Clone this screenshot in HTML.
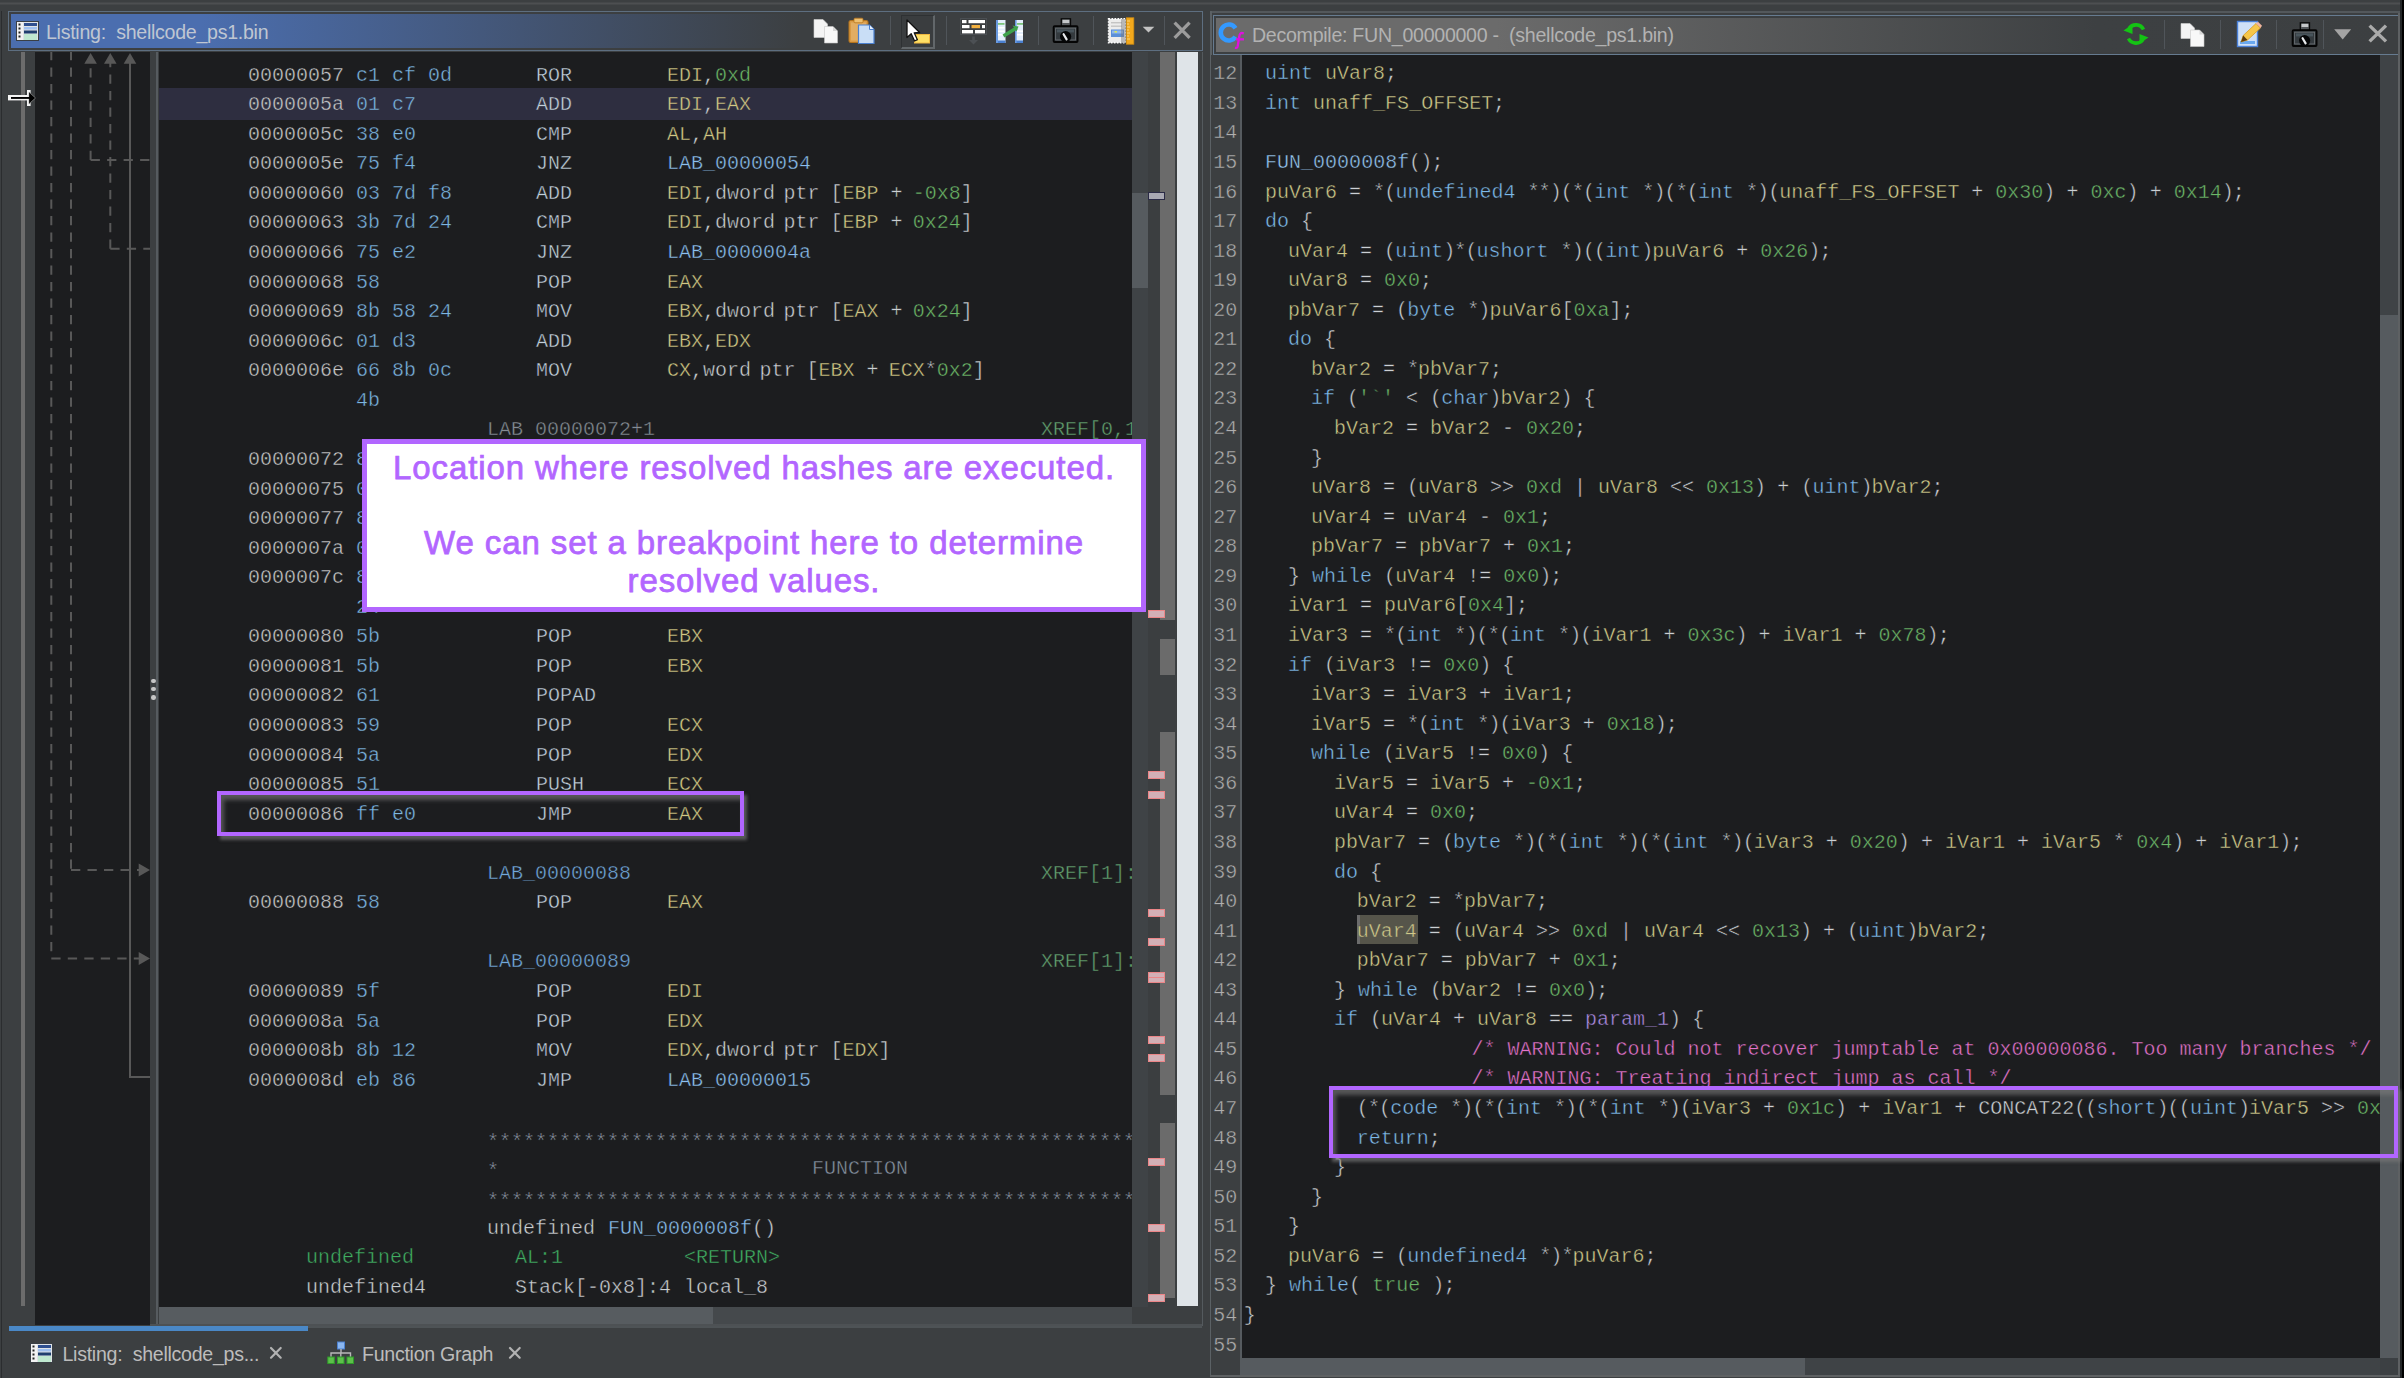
<!DOCTYPE html>
<html><head><meta charset="utf-8"><title>Ghidra</title>
<style>
*{box-sizing:border-box;margin:0;padding:0}
html,body{width:2404px;height:1378px;overflow:hidden;background:#3c3f41}
body{position:relative;font-family:"Liberation Sans",sans-serif}
.abs{position:absolute}
.t{-webkit-text-stroke:0.42px #1c1d1f;position:absolute;white-space:pre;font-family:"Liberation Mono",monospace;font-size:20px;line-height:30px;height:30px;color:#c3c7cb}
.ad{color:#cacaca}.by{color:#7cb6e2}.mn{color:#c2d0dc}.rg{color:#d2c884}.sc{color:#6cb868}.pn{color:#ccd0d4}
.lr{color:#8cc0f0}.lb{color:#6aa0e2}.ol{color:#848c94}.xr{color:#62a06e}.st{color:#848f9e}.gr{color:#40ae62}
.ty{color:#7ebaea}.va{color:#d0ca8a}.fn{color:#94c4f0}.pm{color:#ae8ce2}.cm{color:#e474cc}
.ln{color:#b0b0b0;-webkit-text-stroke:0.42px #3c3f41}
.hr{-webkit-text-stroke-color:#2e2e40}
.as{position:relative;top:3px;color:#98a3b2}
.lb{color:#72a8dc}
.hs{-webkit-text-stroke-color:#56554a}
.k{display:inline-block;white-space:pre}
/* panels */
#top1{left:0;top:2px;width:2404px;height:3px;background:linear-gradient(#404345,#4d4f51 50%,#404345)}
#top2{display:none}
#lhead{left:8px;top:11px;width:1195px;height:40px;border:1px solid #5d6e80}
#lheadfill{left:11px;top:14px;width:1189px;height:34px;background:linear-gradient(90deg,#4b6eaf 0px,#4b6eaf 190px,#3c3f41 790px)}
#lbody{left:159px;top:52px;width:973px;height:1255px;background:#1c1d1f;overflow:hidden}
#lmargin{left:35px;top:52px;width:115px;height:1273px;background:#1c1d1f}
#dbody{left:1242px;top:55px;width:1138px;height:1303px;background:#1c1d1f;overflow:hidden}
#dnum{left:1211px;top:55px;width:31px;height:1323px;background:#3c3f41;overflow:hidden}
.title{position:absolute;white-space:pre;color:#bfc6d2;font-size:19.6px;letter-spacing:-0.28px;line-height:24px}
</style></head>
<body>
<div id="top1" class="abs"></div><div id="top2" class="abs"></div>
<!-- LISTING HEADER -->
<div id="lhead" class="abs"></div><div id="lheadfill" class="abs"></div>
<div class="title" style="left:46px;top:20.3px">Listing:  shellcode_ps1.bin</div>
<!-- listing title icon -->
<svg class="abs" style="left:16px;top:21px" width="24" height="21" viewBox="0 0 24 21">
<rect x="0.5" y="0.5" width="22" height="19" fill="#dfe3e6" stroke="#3a3f45" stroke-width="1"/>
<rect x="1" y="1" width="6" height="18" fill="#f2f2f2"/>
<rect x="2.5" y="2.5" width="2" height="2" fill="#222"/><rect x="2.5" y="6.5" width="2" height="2" fill="#222"/><rect x="2.5" y="10.5" width="2" height="2" fill="#222"/><rect x="2.5" y="14.5" width="2" height="2" fill="#222"/>
<rect x="8" y="2" width="13" height="3" fill="#2f4f8f"/>
<rect x="8" y="6" width="13" height="2.5" fill="#9fc0f0"/>
<rect x="8" y="9.5" width="13" height="3" fill="#1f3f6f"/>
<rect x="8" y="13" width="13" height="6" fill="#bfe8d0"/>
</svg>
<!-- copy -->
<svg class="abs" style="left:812px;top:18px" width="28" height="27" viewBox="0 0 28 27">
<path d="M2 1.5H11L15.5 6V19.5H2Z" fill="#f4f4f4" stroke="#d0d0d0" stroke-width=".6"/>
<path d="M12.5 8.5H21L25.5 13V25H12.5Z" fill="#f8f8f8" stroke="#c8c8c8" stroke-width=".6"/>
<path d="M21 8.5V13H25.5Z" fill="#d8d8d8"/>
</svg>
<!-- paste -->
<svg class="abs" style="left:847px;top:17px" width="30" height="28" viewBox="0 0 30 28">
<rect x="2" y="3.5" width="19" height="22" rx="1.5" fill="#d99a45" stroke="#b5741c" stroke-width="1"/>
<rect x="4" y="5.5" width="15" height="18" fill="#e2ad62"/>
<rect x="7" y="1.2" width="9" height="4.6" rx="1" fill="#efc070" stroke="#b5741c" stroke-width=".8"/>
<path d="M11.5 8H22.5L27 12.5V26.5H11.5Z" fill="#c9def6" stroke="#4a80d0" stroke-width="1.2"/>
<path d="M22.5 8V12.5H27" fill="#eaf2fc" stroke="#4a80d0" stroke-width="1"/>
</svg>
<div class="abs" style="left:890px;top:16px;width:1px;height:29px;background:#50555a"></div>
<!-- selected toggle button -->
<div class="abs" style="left:901px;top:15px;width:34px;height:34px;background:#3a3d3f;border-top:1px solid #2e3133;border-left:1px solid #2e3133;border-right:2px solid #62676a;border-bottom:2px solid #62676a"></div>
<svg class="abs" style="left:903px;top:17px" width="30" height="30" viewBox="0 0 30 30">
<rect x="11.5" y="17.5" width="15" height="8.5" fill="#ffe066" stroke="#efb840" stroke-width="1"/>
<path d="M4 3L4 20.5L8.2 16.8L11.6 24L14.4 22.7L11.2 15.8L16.6 15.5Z" fill="#fff" stroke="#111" stroke-width="1.3" stroke-linejoin="round"/>
</svg>
<div class="abs" style="left:946px;top:16px;width:1px;height:29px;background:#50555a"></div>
<!-- bars icon -->
<svg class="abs" style="left:960px;top:18px" width="28" height="28" viewBox="0 0 28 28">
<rect x="0.5" y="0.5" width="26" height="16" fill="none" stroke="#4a4e52" stroke-width="1"/>
<rect x="2" y="2" width="4.5" height="3.2" fill="#fff"/><rect x="8.5" y="2" width="16.5" height="3.2" fill="#fff"/>
<rect x="2" y="7" width="7.5" height="3.2" fill="#fff"/><rect x="11.5" y="7" width="8.5" height="3.2" fill="#f2b040"/><rect x="22" y="7" width="3" height="3.2" fill="#fff"/>
<rect x="2" y="12" width="11" height="3.4" fill="#fff"/><rect x="15" y="12" width="10" height="3.4" fill="#fff"/>
<path d="M12.2 18.5H14.8V22H18L13.5 26.5L9 22H12.2Z" fill="#4c5054"/>
</svg>
<!-- diff icon -->
<svg class="abs" style="left:995px;top:19px" width="29" height="25" viewBox="0 0 29 25">
<rect x="1" y="1" width="9.5" height="23" fill="#e4eefb"/><rect x="1" y="21.5" width="9.5" height="2.5" fill="#4a80d0"/><rect x="1" y="1" width="2" height="23" fill="#6a9ae0"/>
<rect x="3" y="4" width="6.5" height="1.8" fill="#7cc47c"/><rect x="3" y="8" width="6.5" height="1.5" fill="#fff"/><rect x="3" y="11.5" width="6.5" height="1.5" fill="#fff"/><rect x="3" y="15" width="6.5" height="1.5" fill="#fff"/>
<rect x="20" y="1" width="8" height="23" fill="#e4eefb"/><rect x="20" y="21.5" width="8" height="2.5" fill="#4a80d0"/><rect x="20" y="1" width="1.6" height="23" fill="#6a9ae0"/>
<rect x="22" y="4" width="6" height="1.8" fill="#7cc47c"/><rect x="22" y="11.5" width="6" height="1.5" fill="#fff"/><rect x="22" y="15" width="6" height="1.5" fill="#fff"/>
<path d="M8.5 17L21.5 9" stroke="#3ea24c" stroke-width="3.6" fill="none"/>
<path d="M17.5 6.5L23.5 7.5L21.5 12.5Z" fill="#3ea24c"/>
</svg>
<div class="abs" style="left:1038px;top:16px;width:1px;height:29px;background:#50555a"></div>
<!-- camera -->
<svg class="abs" style="left:1052px;top:17px" width="27" height="27" viewBox="0 0 27 27"><use href="#cam"/></svg>
<div class="abs" style="left:1093px;top:16px;width:1px;height:29px;background:#50555a"></div>
<!-- page+ruler -->
<svg class="abs" style="left:1107px;top:17px" width="28" height="28" viewBox="0 0 28 28">
<rect x="1.5" y="1.8" width="17" height="24" fill="#ececec" stroke="#fff" stroke-width="1.4" stroke-dasharray="1.6 1.4"/>
<rect x="4" y="5" width="11" height="1.4" fill="#c4c4c4"/><rect x="4" y="8.5" width="11" height="1.4" fill="#c4c4c4"/>
<rect x="4" y="12.5" width="13" height="7.5" fill="#5a8fd8"/><rect x="5" y="13.5" width="11" height="3" fill="#8fb8ee"/><rect x="7.5" y="14" width="2.5" height="1.6" fill="#d8e860"/>
<rect x="14" y="2" width="5" height="24" fill="#777" opacity=".45"/>
<rect x="19.4" y="0.8" width="7.4" height="26.4" fill="#f2a81c" stroke="#d08c10" stroke-width=".8"/>
<path d="M20 4H23M20 7H22M20 10H23M20 13H22M20 16H23M20 19H22M20 22H23" stroke="#fbd57a" stroke-width="1"/>
</svg>
<svg class="abs" style="left:1142px;top:26px" width="13" height="8" viewBox="0 0 13 8"><path d="M0.7 0.7H12.3L6.5 6.5Z" fill="#c2c2c2"/></svg>
<div class="abs" style="left:1164px;top:16px;width:1px;height:29px;background:#50555a"></div>
<svg class="abs" style="left:1172px;top:20px" width="20" height="20" viewBox="0 0 20 20"><path d="M2.6 2.6L17.6 17.8M17.6 2.6L2.6 17.8" stroke="#9c9c9c" stroke-width="3.3" fill="none"/></svg>
<svg width="0" height="0" style="position:absolute"><defs>
<g id="cam">
<rect x="9.3" y="1.8" width="9.2" height="7.5" fill="#55595c" stroke="#0a0a0a" stroke-width="1.3"/>
<rect x="10.5" y="2.8" width="6.8" height="3.2" fill="#c4c7c9"/>
<rect x="1.6" y="9.2" width="24" height="15.8" rx="1" fill="#2b3033" stroke="#050505" stroke-width="1.8"/>
<rect x="3.6" y="11.2" width="20" height="11.8" fill="#343a3e" stroke="#6a6f73" stroke-width=".9"/>
<rect x="5" y="12.4" width="17" height="3" fill="#5a6a72" opacity=".55"/>
<circle cx="13.6" cy="19.6" r="5.6" fill="#050607"/>
<path d="M11.6 17.2L14.6 22.4" stroke="#e8eaec" stroke-width="2.2" stroke-linecap="round"/>
</g></g></defs></svg>

<!-- LEFT MARGIN -->
<div class="abs" style="left:1px;top:11px;width:1px;height:1367px;background:#2b2d2f"></div>
<div class="abs" style="left:20.5px;top:52px;width:4.5px;height:1254px;background:#6c6c6c"></div>
<div id="lmargin" class="abs"></div>
<div class="abs" style="left:156px;top:52px;width:2px;height:1273px;background:#565b5f"></div>
<svg class="abs" style="left:35px;top:52px" width="115" height="1273" viewBox="0 0 115 1273" fill="none" stroke="#585858" stroke-width="2">
<g stroke-dasharray="9.3 7.2">
<path d="M16.3 0V906.6" stroke-dashoffset="1"/>
<path d="M16.3 906.6H104"/>
<path d="M36 0V818" stroke-dashoffset="1"/>
<path d="M36 818H104"/>
<path d="M55.6 108V12"/>
<path d="M55.6 108H115"/>
<path d="M75.3 196.7V10"/>
<path d="M75.3 196.7H115"/>
</g>
<path d="M95 6V1025H115"/>
<g fill="#585858" stroke="none">
<path d="M49.3 11.8L55.6 1L61.9 11.8Z"/>
<path d="M69 11.8L75.3 1L81.6 11.8Z"/>
<path d="M88.7 11.8L95 1L101.3 11.8Z"/>
<path d="M103.7 811.5L115 818L103.7 824.5Z"/>
<path d="M103.7 900.1L115 906.6L103.7 913.1Z"/>
</g>
</svg>
<!-- splitter dots -->
<div class="abs" style="left:151.2px;top:678.5px;width:4.6px;height:4.6px;border-radius:50%;background:#c6c6c6"></div>
<div class="abs" style="left:151.2px;top:686.8px;width:4.6px;height:4.6px;border-radius:50%;background:#c6c6c6"></div>
<div class="abs" style="left:151.2px;top:695.0px;width:4.6px;height:4.6px;border-radius:50%;background:#c6c6c6"></div>
<!-- mouse cursor -->
<svg class="abs" style="left:6px;top:88px" width="32" height="20" viewBox="0 0 32 20">
<rect x="2" y="7" width="21" height="5.4" fill="#f4f4f4"/>
<rect x="21" y="2" width="3.6" height="16" fill="#f4f4f4"/>
<path d="M23.2 4.2L29.3 10L23.2 15.8Z" fill="#000" stroke="#9a9a9a" stroke-width="1"/>
<path d="M23.2 4.6L29 10L23.2 15.4Z" fill="#000"/>
<rect x="5" y="9" width="19" height="1.9" fill="#000"/>
</svg>

<!-- LISTING BODY -->
<div id="lbody" class="abs">
<div class="abs" style="left:0;top:36px;width:973px;height:32px;background:#2e2e40"></div>
<div class="t" style="left:89px;top:8.67px"><span class="ad">00000057</span></div>
<div class="t" style="left:197px;top:8.67px"><span class="by">c1 cf 0d</span></div>
<div class="t" style="left:377px;top:8.67px"><span class="mn">ROR</span></div>
<div class="t" style="left:508px;top:8.67px"><span class="k rg" style="width:36.00px">EDI</span><span class="k pn" style="width:12.00px">,</span><span class="k sc" style="width:36.00px">0xd</span></div>
<div class="t hr" style="left:89px;top:38.23px"><span class="ad">0000005a</span></div>
<div class="t hr" style="left:197px;top:38.23px"><span class="by">01 c7</span></div>
<div class="t hr" style="left:377px;top:38.23px"><span class="mn">ADD</span></div>
<div class="t hr" style="left:508px;top:38.23px"><span class="k rg" style="width:36.00px">EDI</span><span class="k pn" style="width:12.00px">,</span><span class="k rg" style="width:36.00px">EAX</span></div>
<div class="t" style="left:89px;top:67.79px"><span class="ad">0000005c</span></div>
<div class="t" style="left:197px;top:67.79px"><span class="by">38 e0</span></div>
<div class="t" style="left:377px;top:67.79px"><span class="mn">CMP</span></div>
<div class="t" style="left:508px;top:67.79px"><span class="k rg" style="width:24.00px">AL</span><span class="k pn" style="width:12.00px">,</span><span class="k rg" style="width:24.00px">AH</span></div>
<div class="t" style="left:89px;top:97.35px"><span class="ad">0000005e</span></div>
<div class="t" style="left:197px;top:97.35px"><span class="by">75 f4</span></div>
<div class="t" style="left:377px;top:97.35px"><span class="mn">JNZ</span></div>
<div class="t" style="left:508px;top:97.35px"><span class="k lr" style="width:144.00px">LAB_00000054</span></div>
<div class="t" style="left:89px;top:126.91px"><span class="ad">00000060</span></div>
<div class="t" style="left:197px;top:126.91px"><span class="by">03 7d f8</span></div>
<div class="t" style="left:377px;top:126.91px"><span class="mn">ADD</span></div>
<div class="t" style="left:508px;top:126.91px"><span class="k rg" style="width:36.00px">EDI</span><span class="k pn" style="width:72.00px">,dword</span><span class="k" style="width:8.6px"> </span><span class="k pn" style="width:36.00px">ptr</span><span class="k" style="width:10.9px"> </span><span class="k pn" style="width:12.00px">[</span><span class="k rg" style="width:36.00px">EBP</span><span class="k pn" style="width:34.20px"> + </span><span class="k sc" style="width:48.00px">-0x8</span><span class="k pn" style="width:12.00px">]</span></div>
<div class="t" style="left:89px;top:156.47px"><span class="ad">00000063</span></div>
<div class="t" style="left:197px;top:156.47px"><span class="by">3b 7d 24</span></div>
<div class="t" style="left:377px;top:156.47px"><span class="mn">CMP</span></div>
<div class="t" style="left:508px;top:156.47px"><span class="k rg" style="width:36.00px">EDI</span><span class="k pn" style="width:72.00px">,dword</span><span class="k" style="width:8.6px"> </span><span class="k pn" style="width:36.00px">ptr</span><span class="k" style="width:10.9px"> </span><span class="k pn" style="width:12.00px">[</span><span class="k rg" style="width:36.00px">EBP</span><span class="k pn" style="width:34.20px"> + </span><span class="k sc" style="width:48.00px">0x24</span><span class="k pn" style="width:12.00px">]</span></div>
<div class="t" style="left:89px;top:186.03px"><span class="ad">00000066</span></div>
<div class="t" style="left:197px;top:186.03px"><span class="by">75 e2</span></div>
<div class="t" style="left:377px;top:186.03px"><span class="mn">JNZ</span></div>
<div class="t" style="left:508px;top:186.03px"><span class="k lr" style="width:144.00px">LAB_0000004a</span></div>
<div class="t" style="left:89px;top:215.59px"><span class="ad">00000068</span></div>
<div class="t" style="left:197px;top:215.59px"><span class="by">58</span></div>
<div class="t" style="left:377px;top:215.59px"><span class="mn">POP</span></div>
<div class="t" style="left:508px;top:215.59px"><span class="k rg" style="width:36.00px">EAX</span></div>
<div class="t" style="left:89px;top:245.15px"><span class="ad">00000069</span></div>
<div class="t" style="left:197px;top:245.15px"><span class="by">8b 58 24</span></div>
<div class="t" style="left:377px;top:245.15px"><span class="mn">MOV</span></div>
<div class="t" style="left:508px;top:245.15px"><span class="k rg" style="width:36.00px">EBX</span><span class="k pn" style="width:72.00px">,dword</span><span class="k" style="width:8.6px"> </span><span class="k pn" style="width:36.00px">ptr</span><span class="k" style="width:10.9px"> </span><span class="k pn" style="width:12.00px">[</span><span class="k rg" style="width:36.00px">EAX</span><span class="k pn" style="width:34.20px"> + </span><span class="k sc" style="width:48.00px">0x24</span><span class="k pn" style="width:12.00px">]</span></div>
<div class="t" style="left:89px;top:274.71px"><span class="ad">0000006c</span></div>
<div class="t" style="left:197px;top:274.71px"><span class="by">01 d3</span></div>
<div class="t" style="left:377px;top:274.71px"><span class="mn">ADD</span></div>
<div class="t" style="left:508px;top:274.71px"><span class="k rg" style="width:36.00px">EBX</span><span class="k pn" style="width:12.00px">,</span><span class="k rg" style="width:36.00px">EDX</span></div>
<div class="t" style="left:89px;top:304.27px"><span class="ad">0000006e</span></div>
<div class="t" style="left:197px;top:304.27px"><span class="by">66 8b 0c</span></div>
<div class="t" style="left:377px;top:304.27px"><span class="mn">MOV</span></div>
<div class="t" style="left:508px;top:304.27px"><span class="k rg" style="width:24.00px">CX</span><span class="k pn" style="width:60.00px">,word</span><span class="k" style="width:8.6px"> </span><span class="k pn" style="width:36.00px">ptr</span><span class="k" style="width:10.9px"> </span><span class="k pn" style="width:12.00px">[</span><span class="k rg" style="width:36.00px">EBX</span><span class="k pn" style="width:34.20px"> + </span><span class="k rg" style="width:36.00px">ECX</span><span class="k pn" style="width:12.00px">*</span><span class="k sc" style="width:36.00px">0x2</span><span class="k pn" style="width:12.00px">]</span></div>
<div class="t" style="left:197px;top:333.83px"><span class="by">4b</span></div>
<div class="t" style="left:328px;top:363.39px"><span class="ol">LAB 00000072+1</span></div>
<div class="t" style="left:882px;top:363.39px"><span class="xr">XREF[0,1]:</span></div>
<div class="t" style="left:89px;top:392.95px"><span class="ad">00000072</span></div>
<div class="t" style="left:197px;top:392.95px"><span class="by">8b 58 1c</span></div>
<div class="t" style="left:377px;top:392.95px"><span class="mn">MOV</span></div>
<div class="t" style="left:508px;top:392.95px"><span class="k rg" style="width:36.00px">EBX</span><span class="k pn" style="width:72.00px">,dword</span><span class="k" style="width:8.6px"> </span><span class="k pn" style="width:36.00px">ptr</span><span class="k" style="width:10.9px"> </span><span class="k pn" style="width:12.00px">[</span><span class="k rg" style="width:36.00px">EAX</span><span class="k pn" style="width:34.20px"> + </span><span class="k sc" style="width:48.00px">0x1c</span><span class="k pn" style="width:12.00px">]</span></div>
<div class="t" style="left:89px;top:422.51px"><span class="ad">00000075</span></div>
<div class="t" style="left:197px;top:422.51px"><span class="by">01 d3</span></div>
<div class="t" style="left:377px;top:422.51px"><span class="mn">ADD</span></div>
<div class="t" style="left:508px;top:422.51px"><span class="k rg" style="width:36.00px">EBX</span><span class="k pn" style="width:12.00px">,</span><span class="k rg" style="width:36.00px">EDX</span></div>
<div class="t" style="left:89px;top:452.07px"><span class="ad">00000077</span></div>
<div class="t" style="left:197px;top:452.07px"><span class="by">8b 04 8b</span></div>
<div class="t" style="left:377px;top:452.07px"><span class="mn">MOV</span></div>
<div class="t" style="left:508px;top:452.07px"><span class="k rg" style="width:36.00px">EAX</span><span class="k pn" style="width:72.00px">,dword</span><span class="k" style="width:8.6px"> </span><span class="k pn" style="width:36.00px">ptr</span><span class="k" style="width:10.9px"> </span><span class="k pn" style="width:12.00px">[</span><span class="k rg" style="width:36.00px">EBX</span><span class="k pn" style="width:34.20px"> + </span><span class="k rg" style="width:36.00px">ECX</span><span class="k pn" style="width:12.00px">*</span><span class="k sc" style="width:36.00px">0x4</span><span class="k pn" style="width:12.00px">]</span></div>
<div class="t" style="left:89px;top:481.63px"><span class="ad">0000007a</span></div>
<div class="t" style="left:197px;top:481.63px"><span class="by">01 d0</span></div>
<div class="t" style="left:377px;top:481.63px"><span class="mn">ADD</span></div>
<div class="t" style="left:508px;top:481.63px"><span class="k rg" style="width:36.00px">EAX</span><span class="k pn" style="width:12.00px">,</span><span class="k rg" style="width:36.00px">EDX</span></div>
<div class="t" style="left:89px;top:511.19px"><span class="ad">0000007c</span></div>
<div class="t" style="left:197px;top:511.19px"><span class="by">89 44 24</span></div>
<div class="t" style="left:377px;top:511.19px"><span class="mn">MOV</span></div>
<div class="t" style="left:508px;top:511.19px"><span class="k pn" style="width:60.00px">dword</span><span class="k" style="width:8.6px"> </span><span class="k pn" style="width:36.00px">ptr</span><span class="k" style="width:10.9px"> </span><span class="k pn" style="width:12.00px">[</span><span class="k rg" style="width:36.00px">ESP</span><span class="k pn" style="width:34.20px"> + </span><span class="k sc" style="width:48.00px">0x24</span><span class="k pn" style="width:24.00px">],</span><span class="k rg" style="width:36.00px">EAX</span></div>
<div class="t" style="left:197px;top:540.75px"><span class="by">24</span></div>
<div class="t" style="left:89px;top:570.31px"><span class="ad">00000080</span></div>
<div class="t" style="left:197px;top:570.31px"><span class="by">5b</span></div>
<div class="t" style="left:377px;top:570.31px"><span class="mn">POP</span></div>
<div class="t" style="left:508px;top:570.31px"><span class="k rg" style="width:36.00px">EBX</span></div>
<div class="t" style="left:89px;top:599.87px"><span class="ad">00000081</span></div>
<div class="t" style="left:197px;top:599.87px"><span class="by">5b</span></div>
<div class="t" style="left:377px;top:599.87px"><span class="mn">POP</span></div>
<div class="t" style="left:508px;top:599.87px"><span class="k rg" style="width:36.00px">EBX</span></div>
<div class="t" style="left:89px;top:629.43px"><span class="ad">00000082</span></div>
<div class="t" style="left:197px;top:629.43px"><span class="by">61</span></div>
<div class="t" style="left:377px;top:629.43px"><span class="mn">POPAD</span></div>
<div class="t" style="left:89px;top:658.99px"><span class="ad">00000083</span></div>
<div class="t" style="left:197px;top:658.99px"><span class="by">59</span></div>
<div class="t" style="left:377px;top:658.99px"><span class="mn">POP</span></div>
<div class="t" style="left:508px;top:658.99px"><span class="k rg" style="width:36.00px">ECX</span></div>
<div class="t" style="left:89px;top:688.55px"><span class="ad">00000084</span></div>
<div class="t" style="left:197px;top:688.55px"><span class="by">5a</span></div>
<div class="t" style="left:377px;top:688.55px"><span class="mn">POP</span></div>
<div class="t" style="left:508px;top:688.55px"><span class="k rg" style="width:36.00px">EDX</span></div>
<div class="t" style="left:89px;top:718.11px"><span class="ad">00000085</span></div>
<div class="t" style="left:197px;top:718.11px"><span class="by">51</span></div>
<div class="t" style="left:377px;top:718.11px"><span class="mn">PUSH</span></div>
<div class="t" style="left:508px;top:718.11px"><span class="k rg" style="width:36.00px">ECX</span></div>
<div class="t" style="left:89px;top:747.67px"><span class="ad">00000086</span></div>
<div class="t" style="left:197px;top:747.67px"><span class="by">ff e0</span></div>
<div class="t" style="left:377px;top:747.67px"><span class="mn">JMP</span></div>
<div class="t" style="left:508px;top:747.67px"><span class="k rg" style="width:36.00px">EAX</span></div>
<div class="t" style="left:328px;top:806.79px"><span class="lb">LAB_00000088</span></div>
<div class="t" style="left:882px;top:806.79px"><span class="xr">XREF[1]:</span></div>
<div class="t" style="left:89px;top:836.35px"><span class="ad">00000088</span></div>
<div class="t" style="left:197px;top:836.35px"><span class="by">58</span></div>
<div class="t" style="left:377px;top:836.35px"><span class="mn">POP</span></div>
<div class="t" style="left:508px;top:836.35px"><span class="k rg" style="width:36.00px">EAX</span></div>
<div class="t" style="left:328px;top:895.47px"><span class="lb">LAB_00000089</span></div>
<div class="t" style="left:882px;top:895.47px"><span class="xr">XREF[1]:</span></div>
<div class="t" style="left:89px;top:925.03px"><span class="ad">00000089</span></div>
<div class="t" style="left:197px;top:925.03px"><span class="by">5f</span></div>
<div class="t" style="left:377px;top:925.03px"><span class="mn">POP</span></div>
<div class="t" style="left:508px;top:925.03px"><span class="k rg" style="width:36.00px">EDI</span></div>
<div class="t" style="left:89px;top:954.59px"><span class="ad">0000008a</span></div>
<div class="t" style="left:197px;top:954.59px"><span class="by">5a</span></div>
<div class="t" style="left:377px;top:954.59px"><span class="mn">POP</span></div>
<div class="t" style="left:508px;top:954.59px"><span class="k rg" style="width:36.00px">EDX</span></div>
<div class="t" style="left:89px;top:984.15px"><span class="ad">0000008b</span></div>
<div class="t" style="left:197px;top:984.15px"><span class="by">8b 12</span></div>
<div class="t" style="left:377px;top:984.15px"><span class="mn">MOV</span></div>
<div class="t" style="left:508px;top:984.15px"><span class="k rg" style="width:36.00px">EDX</span><span class="k pn" style="width:72.00px">,dword</span><span class="k" style="width:8.6px"> </span><span class="k pn" style="width:36.00px">ptr</span><span class="k" style="width:10.9px"> </span><span class="k pn" style="width:12.00px">[</span><span class="k rg" style="width:36.00px">EDX</span><span class="k pn" style="width:12.00px">]</span></div>
<div class="t" style="left:89px;top:1013.71px"><span class="ad">0000008d</span></div>
<div class="t" style="left:197px;top:1013.71px"><span class="by">eb 86</span></div>
<div class="t" style="left:377px;top:1013.71px"><span class="mn">JMP</span></div>
<div class="t" style="left:508px;top:1013.71px"><span class="k lr" style="width:144.00px">LAB_00000015</span></div>
<div class="t" style="left:328px;top:1072.83px"><span class="st as">************************************************************</span></div>
<div class="t" style="left:328px;top:1102.39px"><span class="st as">*</span></div>
<div class="t" style="left:653px;top:1102.39px"><span class="st">FUNCTION</span></div>
<div class="t" style="left:328px;top:1131.95px"><span class="st as">************************************************************</span></div>
<div class="t" style="left:328px;top:1161.51px"><span class="pn">undefined</span></div>
<div class="t" style="left:449px;top:1161.51px"><span class="k lr" style="width:144.00px">FUN_0000008f</span><span class="k pn" style="width:24.00px">()</span></div>
<div class="t" style="left:147px;top:1191.07px"><span class="gr">undefined</span></div>
<div class="t" style="left:356px;top:1191.07px"><span class="gr">AL:1</span></div>
<div class="t" style="left:525px;top:1191.07px"><span class="gr">&lt;RETURN&gt;</span></div>
<div class="t" style="left:147px;top:1220.63px"><span class="pn">undefined4</span></div>
<div class="t" style="left:356px;top:1220.63px"><span class="pn">Stack[-0x8]:4</span></div>
<div class="t" style="left:525px;top:1220.63px"><span class="pn">local_8</span></div>
</div>
<div class="abs" style="left:1132px;top:52px;width:16px;height:1255px;background:#3f4346"></div>
<div class="abs" style="left:1132px;top:193px;width:16px;height:95px;background:#565b5f"></div>
<div class="abs" style="left:1148px;top:52px;width:12px;height:1255px;background:#3b3e40"></div>
<div class="abs" style="left:1160px;top:52px;width:15px;height:568px;background:#6b6b6b"></div>
<div class="abs" style="left:1160px;top:639px;width:15px;height:36px;background:#6b6b6b"></div>
<div class="abs" style="left:1160px;top:732px;width:15px;height:363px;background:#6b6b6b"></div>
<div class="abs" style="left:1160px;top:1123px;width:15px;height:175px;background:#6b6b6b"></div>
<div class="abs" style="left:1177px;top:52px;width:21px;height:1254px;background:#dfe4e8"></div>
<div class="abs" style="left:1202px;top:52px;width:1px;height:1274px;background:#545a5e"></div>
<div class="abs" style="left:1148px;top:192px;width:17px;height:8px;background:#a8a8b2;border:1px solid #2a2a45"></div>
<div class="abs" style="left:1148px;top:610px;width:17px;height:8px;background:#d3b0b6;border:1px solid #ec8688"></div>
<div class="abs" style="left:1148px;top:771px;width:17px;height:8px;background:#d3b0b6;border:1px solid #ec8688"></div>
<div class="abs" style="left:1148px;top:790.5px;width:17px;height:8px;background:#d3b0b6;border:1px solid #ec8688"></div>
<div class="abs" style="left:1148px;top:908.5px;width:17px;height:8px;background:#d3b0b6;border:1px solid #ec8688"></div>
<div class="abs" style="left:1148px;top:937.5px;width:17px;height:8px;background:#d3b0b6;border:1px solid #ec8688"></div>
<div class="abs" style="left:1148px;top:1036px;width:17px;height:8px;background:#d3b0b6;border:1px solid #ec8688"></div>
<div class="abs" style="left:1148px;top:1053.5px;width:17px;height:8px;background:#d3b0b6;border:1px solid #ec8688"></div>
<div class="abs" style="left:1148px;top:1157.5px;width:17px;height:8px;background:#d3b0b6;border:1px solid #ec8688"></div>
<div class="abs" style="left:1148px;top:1223.5px;width:17px;height:8px;background:#d3b0b6;border:1px solid #ec8688"></div>
<div class="abs" style="left:1148px;top:1293.5px;width:17px;height:8px;background:#d3b0b6;border:1px solid #ec8688"></div>
<div class="abs" style="left:1148px;top:972px;width:17px;height:11px;background:#d3b0b6;border:1px solid #ec8688"></div>
<div class="abs" style="left:1149px;top:977px;width:15px;height:1px;background:#ec8688"></div>
<div class="abs" style="left:159px;top:1307px;width:1042px;height:17px;background:#45494c"></div>
<div class="abs" style="left:159px;top:1307px;width:554px;height:17px;background:#575c60"></div>
<div class="abs" style="left:1132px;top:1307px;width:69px;height:17px;background:#3c3f41"></div>
<div class="abs" style="left:150px;top:1324px;width:1052px;height:1.5px;background:#4d5154"></div>
<div class="abs" style="left:308px;top:1326px;width:894px;height:2px;background:#4e5356"></div>
<div class="abs" style="left:9px;top:1326px;width:299px;height:4.5px;background:#4a88c7"></div>
<svg class="abs" style="left:30px;top:1343px" width="24" height="21" viewBox="0 0 24 21">
<rect x="0.5" y="0.5" width="22" height="19" fill="#dfe3e6" stroke="#3a3f45" stroke-width="1"/>
<rect x="1" y="1" width="6" height="18" fill="#f2f2f2"/>
<rect x="2.5" y="2.5" width="2" height="2" fill="#222"/><rect x="2.5" y="6.5" width="2" height="2" fill="#222"/><rect x="2.5" y="10.5" width="2" height="2" fill="#222"/><rect x="2.5" y="14.5" width="2" height="2" fill="#222"/>
<rect x="8" y="2" width="13" height="3" fill="#2f4f8f"/>
<rect x="8" y="6" width="13" height="2.5" fill="#9fc0f0"/>
<rect x="8" y="9.5" width="13" height="3" fill="#1f3f6f"/>
<rect x="8" y="13" width="13" height="6" fill="#bfe8d0"/>
</svg>
<div class="title" id="tab1" style="left:62.5px;top:1342px;color:#bcbcbc">Listing:  shellcode_ps...</div>
<svg class="abs" style="left:269px;top:1345.6px" width="14" height="14" viewBox="0 0 14 14"><path d="M2 2L11.7 11.7M11.7 2L2 11.7" stroke="#b2b2b2" stroke-width="2.2" stroke-linecap="round" fill="none"/></svg>
<svg class="abs" style="left:327px;top:1341px" width="27" height="24" viewBox="0 0 27 24">
<rect x="10.5" y="1" width="7" height="7" fill="#8ab6f0" stroke="#4a80d0" stroke-width="1"/>
<path d="M14 8V12M4 16V12H23.5V16M13.8 12V16" stroke="#b8b8b8" stroke-width="1.4" fill="none"/>
<rect x="0.8" y="16" width="6.5" height="6.5" fill="#5cc04a" stroke="#2f9a2a" stroke-width="1"/>
<rect x="10.5" y="16" width="6.5" height="6.5" fill="#5cc04a" stroke="#2f9a2a" stroke-width="1"/>
<rect x="20" y="16" width="6.5" height="6.5" fill="#5cc04a" stroke="#2f9a2a" stroke-width="1"/>
</svg>
<div class="title" id="tab2" style="left:362px;top:1342px;color:#bcbcbc">Function Graph</div>
<svg class="abs" style="left:507.6px;top:1345.8px" width="14" height="14" viewBox="0 0 14 14"><path d="M2 2L11.7 11.7M11.7 2L2 11.7" stroke="#b2b2b2" stroke-width="2.2" stroke-linecap="round" fill="none"/></svg>

<!-- DECOMPILE -->
<!-- decompile panel frame -->
<div class="abs" style="left:1210px;top:11px;width:1194px;height:2px;background:#53585c"></div>
<div class="abs" style="left:1210px;top:11px;width:1.5px;height:1367px;background:#5b6165"></div>
<div class="abs" style="left:1240.3px;top:55px;width:1.7px;height:1320px;background:#565b5f;z-index:3"></div>
<div class="abs" style="left:1213px;top:15px;width:1187px;height:40px;border:1px solid #667b90"></div>
<div class="abs" style="left:1216px;top:18px;width:1181px;height:34px;background:linear-gradient(90deg,#6b6b6b 0px,#6b6b6b 280px,#3d4042 880px,#3c3f41 100%)"></div>
<svg class="abs" style="left:1218px;top:22px" width="30" height="28" viewBox="0 0 30 28">
<path d="M17.5 6.2A8 8 0 1 0 17.5 14.8" fill="none" stroke="#3399ff" stroke-width="4.6"/>
<path d="M25.8 11.5C22.5 10 21.5 12 21.2 15L19.6 24.5C19.3 26 18.2 26 17 25.6" fill="none" stroke="#e010e0" stroke-width="2.3"/>
<path d="M18 17.3H26" stroke="#e010e0" stroke-width="2.3"/>
</svg>
<div class="title" style="left:1252px;top:22.5px;color:#b2b2b2" id="dtitle">Decompile: FUN_00000000 -  (shellcode_ps1.bin)</div>
<!-- refresh -->
<svg class="abs" style="left:2122px;top:20px" width="28" height="28" viewBox="0 0 28 28">
<path d="M21.5 9.5A8.5 8.5 0 0 0 7 8.5" fill="none" stroke="#14c414" stroke-width="3.6"/>
<path d="M1.5 10.5L10.5 4.5L10.5 14Z" fill="#14c414"/>
<path d="M6.5 18.5A8.5 8.5 0 0 0 21 19.5" fill="none" stroke="#14c414" stroke-width="3.6"/>
<path d="M26.5 17.5L17.5 23.5L17.5 14Z" fill="#14c414"/>
</svg>
<div class="abs" style="left:2164px;top:20px;width:1px;height:29px;background:#50555a"></div>
<svg class="abs" style="left:2179px;top:22px" width="28" height="27" viewBox="0 0 28 27">
<path d="M2 1.5H11L15.5 6V16.5H2Z" fill="#f4f4f4" stroke="#d0d0d0" stroke-width=".6"/>
<path d="M11.5 8H20.5L25 12.5V24.5H11.5Z" fill="#f8f8f8" stroke="#c8c8c8" stroke-width=".6"/>
<path d="M20.5 8V12.5H25Z" fill="#d8d8d8"/>
</svg>
<div class="abs" style="left:2220px;top:20px;width:1px;height:29px;background:#50555a"></div>
<!-- edit -->
<svg class="abs" style="left:2236px;top:20px" width="27" height="28" viewBox="0 0 27 28">
<rect x="1.5" y="1.5" width="20" height="25" fill="#cfe0f7" stroke="#4a80d8" stroke-width="1.4"/>
<rect x="4" y="21" width="15" height="3" fill="#6aa8ee"/>
<path d="M5 22L7.2 15.5L20 3.5L24.5 8L11.5 20Z" fill="#f6c64a" stroke="#d89a20" stroke-width=".8"/>
<path d="M20 3.5L22 1.8L26 5.8L24.5 8Z" fill="#f2b6a0"/>
<path d="M5 22L7.2 15.5L11.5 20Z" fill="#5a3a10"/>
</svg>
<div class="abs" style="left:2276px;top:20px;width:1px;height:29px;background:#50555a"></div>
<svg class="abs" style="left:2291px;top:21px" width="27" height="27" viewBox="0 0 27 27"><use href="#cam"/></svg>
<div class="abs" style="left:2323px;top:20px;width:1px;height:29px;background:#50555a"></div>
<svg class="abs" style="left:2333px;top:28px" width="20" height="13" viewBox="0 0 20 13"><path d="M1.2 1.2H18.2L9.7 11.5Z" fill="#a4a4a4"/></svg>
<svg class="abs" style="left:2367px;top:23px" width="22" height="21" viewBox="0 0 22 21"><path d="M2.6 2.6L19 18.4M19 2.6L2.6 18.4" stroke="#aaaaaa" stroke-width="3.4" fill="none"/></svg>

<div id="dnum" class="abs">
<div class="t ln" style="left:2.2px;top:4.27px">12</div>
<div class="t ln" style="left:2.2px;top:33.83px">13</div>
<div class="t ln" style="left:2.2px;top:63.40px">14</div>
<div class="t ln" style="left:2.2px;top:92.97px">15</div>
<div class="t ln" style="left:2.2px;top:122.53px">16</div>
<div class="t ln" style="left:2.2px;top:152.10px">17</div>
<div class="t ln" style="left:2.2px;top:181.66px">18</div>
<div class="t ln" style="left:2.2px;top:211.23px">19</div>
<div class="t ln" style="left:2.2px;top:240.79px">20</div>
<div class="t ln" style="left:2.2px;top:270.36px">21</div>
<div class="t ln" style="left:2.2px;top:299.92px">22</div>
<div class="t ln" style="left:2.2px;top:329.49px">23</div>
<div class="t ln" style="left:2.2px;top:359.05px">24</div>
<div class="t ln" style="left:2.2px;top:388.62px">25</div>
<div class="t ln" style="left:2.2px;top:418.18px">26</div>
<div class="t ln" style="left:2.2px;top:447.75px">27</div>
<div class="t ln" style="left:2.2px;top:477.31px">28</div>
<div class="t ln" style="left:2.2px;top:506.88px">29</div>
<div class="t ln" style="left:2.2px;top:536.44px">30</div>
<div class="t ln" style="left:2.2px;top:566.00px">31</div>
<div class="t ln" style="left:2.2px;top:595.57px">32</div>
<div class="t ln" style="left:2.2px;top:625.13px">33</div>
<div class="t ln" style="left:2.2px;top:654.70px">34</div>
<div class="t ln" style="left:2.2px;top:684.26px">35</div>
<div class="t ln" style="left:2.2px;top:713.83px">36</div>
<div class="t ln" style="left:2.2px;top:743.39px">37</div>
<div class="t ln" style="left:2.2px;top:772.96px">38</div>
<div class="t ln" style="left:2.2px;top:802.52px">39</div>
<div class="t ln" style="left:2.2px;top:832.09px">40</div>
<div class="t ln" style="left:2.2px;top:861.65px">41</div>
<div class="t ln" style="left:2.2px;top:891.22px">42</div>
<div class="t ln" style="left:2.2px;top:920.78px">43</div>
<div class="t ln" style="left:2.2px;top:950.35px">44</div>
<div class="t ln" style="left:2.2px;top:979.92px">45</div>
<div class="t ln" style="left:2.2px;top:1009.48px">46</div>
<div class="t ln" style="left:2.2px;top:1039.05px">47</div>
<div class="t ln" style="left:2.2px;top:1068.61px">48</div>
<div class="t ln" style="left:2.2px;top:1098.17px">49</div>
<div class="t ln" style="left:2.2px;top:1127.74px">50</div>
<div class="t ln" style="left:2.2px;top:1157.31px">51</div>
<div class="t ln" style="left:2.2px;top:1186.87px">52</div>
<div class="t ln" style="left:2.2px;top:1216.43px">53</div>
<div class="t ln" style="left:2.2px;top:1246.00px">54</div>
<div class="t ln" style="left:2.2px;top:1275.57px">55</div>
</div>
<div id="dbody" class="abs">
<div class="t" style="left:23.12000000000012px;top:4.27px"><span class="k ty" style="width:48.00px">uint</span><span class="k pn" style="width:12.00px"> </span><span class="k va" style="width:60.00px">uVar8</span><span class="k pn" style="width:12.00px">;</span></div>
<div class="t" style="left:23.12000000000012px;top:33.83px"><span class="k ty" style="width:36.00px">int</span><span class="k pn" style="width:12.00px"> </span><span class="k va" style="width:180.00px">unaff_FS_OFFSET</span><span class="k pn" style="width:12.00px">;</span></div>
<div class="t" style="left:23.12000000000012px;top:92.97px"><span class="k fn" style="width:144.00px">FUN_0000008f</span><span class="k pn" style="width:11.15px">(</span><span class="k pn" style="width:11.15px">)</span><span class="k pn" style="width:12.00px">;</span></div>
<div class="t" style="left:23.12000000000012px;top:122.53px"><span class="k va" style="width:72.00px">puVar6</span><span class="k pn" style="width:12.00px"> </span><span class="k pn" style="width:12.00px">=</span><span class="k pn" style="width:12.00px"> </span><span class="k pn" style="width:11.15px">*</span><span class="k pn" style="width:11.15px">(</span><span class="k ty" style="width:120.00px">undefined4</span><span class="k pn" style="width:12.00px"> </span><span class="k pn" style="width:11.15px">*</span><span class="k pn" style="width:11.15px">*</span><span class="k pn" style="width:11.15px">)</span><span class="k pn" style="width:11.15px">(</span><span class="k pn" style="width:11.15px">*</span><span class="k pn" style="width:11.15px">(</span><span class="k ty" style="width:36.00px">int</span><span class="k pn" style="width:12.00px"> </span><span class="k pn" style="width:11.15px">*</span><span class="k pn" style="width:11.15px">)</span><span class="k pn" style="width:11.15px">(</span><span class="k pn" style="width:11.15px">*</span><span class="k pn" style="width:11.15px">(</span><span class="k ty" style="width:36.00px">int</span><span class="k pn" style="width:12.00px"> </span><span class="k pn" style="width:11.15px">*</span><span class="k pn" style="width:11.15px">)</span><span class="k pn" style="width:11.15px">(</span><span class="k va" style="width:180.00px">unaff_FS_OFFSET</span><span class="k pn" style="width:12.00px"> </span><span class="k pn" style="width:12.00px">+</span><span class="k pn" style="width:12.00px"> </span><span class="k sc" style="width:48.00px">0x30</span><span class="k pn" style="width:11.15px">)</span><span class="k pn" style="width:12.00px"> </span><span class="k pn" style="width:12.00px">+</span><span class="k pn" style="width:12.00px"> </span><span class="k sc" style="width:36.00px">0xc</span><span class="k pn" style="width:11.15px">)</span><span class="k pn" style="width:12.00px"> </span><span class="k pn" style="width:12.00px">+</span><span class="k pn" style="width:12.00px"> </span><span class="k sc" style="width:48.00px">0x14</span><span class="k pn" style="width:11.15px">)</span><span class="k pn" style="width:12.00px">;</span></div>
<div class="t" style="left:23.12000000000012px;top:152.10px"><span class="k ty" style="width:24.00px">do</span><span class="k pn" style="width:12.00px"> </span><span class="k pn" style="width:12.00px">{</span></div>
<div class="t" style="left:46.039999999999964px;top:181.66px"><span class="k va" style="width:60.00px">uVar4</span><span class="k pn" style="width:12.00px"> </span><span class="k pn" style="width:12.00px">=</span><span class="k pn" style="width:12.00px"> </span><span class="k pn" style="width:11.15px">(</span><span class="k ty" style="width:48.00px">uint</span><span class="k pn" style="width:11.15px">)</span><span class="k pn" style="width:11.15px">*</span><span class="k pn" style="width:11.15px">(</span><span class="k ty" style="width:72.00px">ushort</span><span class="k pn" style="width:12.00px"> </span><span class="k pn" style="width:11.15px">*</span><span class="k pn" style="width:11.15px">)</span><span class="k pn" style="width:11.15px">(</span><span class="k pn" style="width:11.15px">(</span><span class="k ty" style="width:36.00px">int</span><span class="k pn" style="width:11.15px">)</span><span class="k va" style="width:72.00px">puVar6</span><span class="k pn" style="width:12.00px"> </span><span class="k pn" style="width:12.00px">+</span><span class="k pn" style="width:12.00px"> </span><span class="k sc" style="width:48.00px">0x26</span><span class="k pn" style="width:11.15px">)</span><span class="k pn" style="width:12.00px">;</span></div>
<div class="t" style="left:46.039999999999964px;top:211.23px"><span class="k va" style="width:60.00px">uVar8</span><span class="k pn" style="width:12.00px"> </span><span class="k pn" style="width:12.00px">=</span><span class="k pn" style="width:12.00px"> </span><span class="k sc" style="width:36.00px">0x0</span><span class="k pn" style="width:12.00px">;</span></div>
<div class="t" style="left:46.039999999999964px;top:240.79px"><span class="k va" style="width:72.00px">pbVar7</span><span class="k pn" style="width:12.00px"> </span><span class="k pn" style="width:12.00px">=</span><span class="k pn" style="width:12.00px"> </span><span class="k pn" style="width:11.15px">(</span><span class="k ty" style="width:48.00px">byte</span><span class="k pn" style="width:12.00px"> </span><span class="k pn" style="width:11.15px">*</span><span class="k pn" style="width:11.15px">)</span><span class="k va" style="width:72.00px">puVar6</span><span class="k pn" style="width:12.00px">[</span><span class="k sc" style="width:36.00px">0xa</span><span class="k pn" style="width:12.00px">]</span><span class="k pn" style="width:12.00px">;</span></div>
<div class="t" style="left:46.039999999999964px;top:270.36px"><span class="k ty" style="width:24.00px">do</span><span class="k pn" style="width:12.00px"> </span><span class="k pn" style="width:12.00px">{</span></div>
<div class="t" style="left:68.96000000000004px;top:299.92px"><span class="k va" style="width:60.00px">bVar2</span><span class="k pn" style="width:12.00px"> </span><span class="k pn" style="width:12.00px">=</span><span class="k pn" style="width:12.00px"> </span><span class="k pn" style="width:11.15px">*</span><span class="k va" style="width:72.00px">pbVar7</span><span class="k pn" style="width:12.00px">;</span></div>
<div class="t" style="left:68.96000000000004px;top:329.49px"><span class="k ty" style="width:24.00px">if</span><span class="k pn" style="width:12.00px"> </span><span class="k pn" style="width:11.15px">(</span><span class="k sc" style="width:36.00px">'`'</span><span class="k pn" style="width:12.00px"> </span><span class="k pn" style="width:12.00px">&lt;</span><span class="k pn" style="width:12.00px"> </span><span class="k pn" style="width:11.15px">(</span><span class="k ty" style="width:48.00px">char</span><span class="k pn" style="width:11.15px">)</span><span class="k va" style="width:60.00px">bVar2</span><span class="k pn" style="width:11.15px">)</span><span class="k pn" style="width:12.00px"> </span><span class="k pn" style="width:12.00px">{</span></div>
<div class="t" style="left:91.88000000000011px;top:359.05px"><span class="k va" style="width:60.00px">bVar2</span><span class="k pn" style="width:12.00px"> </span><span class="k pn" style="width:12.00px">=</span><span class="k pn" style="width:12.00px"> </span><span class="k va" style="width:60.00px">bVar2</span><span class="k pn" style="width:12.00px"> </span><span class="k pn" style="width:12.00px">-</span><span class="k pn" style="width:12.00px"> </span><span class="k sc" style="width:48.00px">0x20</span><span class="k pn" style="width:12.00px">;</span></div>
<div class="t" style="left:68.96000000000004px;top:388.62px"><span class="k pn" style="width:12.00px">}</span></div>
<div class="t" style="left:68.96000000000004px;top:418.18px"><span class="k va" style="width:60.00px">uVar8</span><span class="k pn" style="width:12.00px"> </span><span class="k pn" style="width:12.00px">=</span><span class="k pn" style="width:12.00px"> </span><span class="k pn" style="width:11.15px">(</span><span class="k va" style="width:60.00px">uVar8</span><span class="k pn" style="width:12.00px"> </span><span class="k pn" style="width:12.00px">&gt;</span><span class="k pn" style="width:12.00px">&gt;</span><span class="k pn" style="width:12.00px"> </span><span class="k sc" style="width:36.00px">0xd</span><span class="k pn" style="width:12.00px"> </span><span class="k pn" style="width:12.00px">|</span><span class="k pn" style="width:12.00px"> </span><span class="k va" style="width:60.00px">uVar8</span><span class="k pn" style="width:12.00px"> </span><span class="k pn" style="width:12.00px">&lt;</span><span class="k pn" style="width:12.00px">&lt;</span><span class="k pn" style="width:12.00px"> </span><span class="k sc" style="width:48.00px">0x13</span><span class="k pn" style="width:11.15px">)</span><span class="k pn" style="width:12.00px"> </span><span class="k pn" style="width:12.00px">+</span><span class="k pn" style="width:12.00px"> </span><span class="k pn" style="width:11.15px">(</span><span class="k ty" style="width:48.00px">uint</span><span class="k pn" style="width:11.15px">)</span><span class="k va" style="width:60.00px">bVar2</span><span class="k pn" style="width:12.00px">;</span></div>
<div class="t" style="left:68.96000000000004px;top:447.75px"><span class="k va" style="width:60.00px">uVar4</span><span class="k pn" style="width:12.00px"> </span><span class="k pn" style="width:12.00px">=</span><span class="k pn" style="width:12.00px"> </span><span class="k va" style="width:60.00px">uVar4</span><span class="k pn" style="width:12.00px"> </span><span class="k pn" style="width:12.00px">-</span><span class="k pn" style="width:12.00px"> </span><span class="k sc" style="width:36.00px">0x1</span><span class="k pn" style="width:12.00px">;</span></div>
<div class="t" style="left:68.96000000000004px;top:477.31px"><span class="k va" style="width:72.00px">pbVar7</span><span class="k pn" style="width:12.00px"> </span><span class="k pn" style="width:12.00px">=</span><span class="k pn" style="width:12.00px"> </span><span class="k va" style="width:72.00px">pbVar7</span><span class="k pn" style="width:12.00px"> </span><span class="k pn" style="width:12.00px">+</span><span class="k pn" style="width:12.00px"> </span><span class="k sc" style="width:36.00px">0x1</span><span class="k pn" style="width:12.00px">;</span></div>
<div class="t" style="left:46.039999999999964px;top:506.88px"><span class="k pn" style="width:12.00px">}</span><span class="k pn" style="width:12.00px"> </span><span class="k ty" style="width:60.00px">while</span><span class="k pn" style="width:12.00px"> </span><span class="k pn" style="width:11.15px">(</span><span class="k va" style="width:60.00px">uVar4</span><span class="k pn" style="width:12.00px"> </span><span class="k pn" style="width:12.00px">!</span><span class="k pn" style="width:12.00px">=</span><span class="k pn" style="width:12.00px"> </span><span class="k sc" style="width:36.00px">0x0</span><span class="k pn" style="width:11.15px">)</span><span class="k pn" style="width:12.00px">;</span></div>
<div class="t" style="left:46.039999999999964px;top:536.44px"><span class="k va" style="width:60.00px">iVar1</span><span class="k pn" style="width:12.00px"> </span><span class="k pn" style="width:12.00px">=</span><span class="k pn" style="width:12.00px"> </span><span class="k va" style="width:72.00px">puVar6</span><span class="k pn" style="width:12.00px">[</span><span class="k sc" style="width:36.00px">0x4</span><span class="k pn" style="width:12.00px">]</span><span class="k pn" style="width:12.00px">;</span></div>
<div class="t" style="left:46.039999999999964px;top:566.00px"><span class="k va" style="width:60.00px">iVar3</span><span class="k pn" style="width:12.00px"> </span><span class="k pn" style="width:12.00px">=</span><span class="k pn" style="width:12.00px"> </span><span class="k pn" style="width:11.15px">*</span><span class="k pn" style="width:11.15px">(</span><span class="k ty" style="width:36.00px">int</span><span class="k pn" style="width:12.00px"> </span><span class="k pn" style="width:11.15px">*</span><span class="k pn" style="width:11.15px">)</span><span class="k pn" style="width:11.15px">(</span><span class="k pn" style="width:11.15px">*</span><span class="k pn" style="width:11.15px">(</span><span class="k ty" style="width:36.00px">int</span><span class="k pn" style="width:12.00px"> </span><span class="k pn" style="width:11.15px">*</span><span class="k pn" style="width:11.15px">)</span><span class="k pn" style="width:11.15px">(</span><span class="k va" style="width:60.00px">iVar1</span><span class="k pn" style="width:12.00px"> </span><span class="k pn" style="width:12.00px">+</span><span class="k pn" style="width:12.00px"> </span><span class="k sc" style="width:48.00px">0x3c</span><span class="k pn" style="width:11.15px">)</span><span class="k pn" style="width:12.00px"> </span><span class="k pn" style="width:12.00px">+</span><span class="k pn" style="width:12.00px"> </span><span class="k va" style="width:60.00px">iVar1</span><span class="k pn" style="width:12.00px"> </span><span class="k pn" style="width:12.00px">+</span><span class="k pn" style="width:12.00px"> </span><span class="k sc" style="width:48.00px">0x78</span><span class="k pn" style="width:11.15px">)</span><span class="k pn" style="width:12.00px">;</span></div>
<div class="t" style="left:46.039999999999964px;top:595.57px"><span class="k ty" style="width:24.00px">if</span><span class="k pn" style="width:12.00px"> </span><span class="k pn" style="width:11.15px">(</span><span class="k va" style="width:60.00px">iVar3</span><span class="k pn" style="width:12.00px"> </span><span class="k pn" style="width:12.00px">!</span><span class="k pn" style="width:12.00px">=</span><span class="k pn" style="width:12.00px"> </span><span class="k sc" style="width:36.00px">0x0</span><span class="k pn" style="width:11.15px">)</span><span class="k pn" style="width:12.00px"> </span><span class="k pn" style="width:12.00px">{</span></div>
<div class="t" style="left:68.96000000000004px;top:625.13px"><span class="k va" style="width:60.00px">iVar3</span><span class="k pn" style="width:12.00px"> </span><span class="k pn" style="width:12.00px">=</span><span class="k pn" style="width:12.00px"> </span><span class="k va" style="width:60.00px">iVar3</span><span class="k pn" style="width:12.00px"> </span><span class="k pn" style="width:12.00px">+</span><span class="k pn" style="width:12.00px"> </span><span class="k va" style="width:60.00px">iVar1</span><span class="k pn" style="width:12.00px">;</span></div>
<div class="t" style="left:68.96000000000004px;top:654.70px"><span class="k va" style="width:60.00px">iVar5</span><span class="k pn" style="width:12.00px"> </span><span class="k pn" style="width:12.00px">=</span><span class="k pn" style="width:12.00px"> </span><span class="k pn" style="width:11.15px">*</span><span class="k pn" style="width:11.15px">(</span><span class="k ty" style="width:36.00px">int</span><span class="k pn" style="width:12.00px"> </span><span class="k pn" style="width:11.15px">*</span><span class="k pn" style="width:11.15px">)</span><span class="k pn" style="width:11.15px">(</span><span class="k va" style="width:60.00px">iVar3</span><span class="k pn" style="width:12.00px"> </span><span class="k pn" style="width:12.00px">+</span><span class="k pn" style="width:12.00px"> </span><span class="k sc" style="width:48.00px">0x18</span><span class="k pn" style="width:11.15px">)</span><span class="k pn" style="width:12.00px">;</span></div>
<div class="t" style="left:68.96000000000004px;top:684.26px"><span class="k ty" style="width:60.00px">while</span><span class="k pn" style="width:12.00px"> </span><span class="k pn" style="width:11.15px">(</span><span class="k va" style="width:60.00px">iVar5</span><span class="k pn" style="width:12.00px"> </span><span class="k pn" style="width:12.00px">!</span><span class="k pn" style="width:12.00px">=</span><span class="k pn" style="width:12.00px"> </span><span class="k sc" style="width:36.00px">0x0</span><span class="k pn" style="width:11.15px">)</span><span class="k pn" style="width:12.00px"> </span><span class="k pn" style="width:12.00px">{</span></div>
<div class="t" style="left:91.88000000000011px;top:713.83px"><span class="k va" style="width:60.00px">iVar5</span><span class="k pn" style="width:12.00px"> </span><span class="k pn" style="width:12.00px">=</span><span class="k pn" style="width:12.00px"> </span><span class="k va" style="width:60.00px">iVar5</span><span class="k pn" style="width:12.00px"> </span><span class="k pn" style="width:12.00px">+</span><span class="k pn" style="width:12.00px"> </span><span class="k sc" style="width:48.00px">-0x1</span><span class="k pn" style="width:12.00px">;</span></div>
<div class="t" style="left:91.88000000000011px;top:743.39px"><span class="k va" style="width:60.00px">uVar4</span><span class="k pn" style="width:12.00px"> </span><span class="k pn" style="width:12.00px">=</span><span class="k pn" style="width:12.00px"> </span><span class="k sc" style="width:36.00px">0x0</span><span class="k pn" style="width:12.00px">;</span></div>
<div class="t" style="left:91.88000000000011px;top:772.96px"><span class="k va" style="width:72.00px">pbVar7</span><span class="k pn" style="width:12.00px"> </span><span class="k pn" style="width:12.00px">=</span><span class="k pn" style="width:12.00px"> </span><span class="k pn" style="width:11.15px">(</span><span class="k ty" style="width:48.00px">byte</span><span class="k pn" style="width:12.00px"> </span><span class="k pn" style="width:11.15px">*</span><span class="k pn" style="width:11.15px">)</span><span class="k pn" style="width:11.15px">(</span><span class="k pn" style="width:11.15px">*</span><span class="k pn" style="width:11.15px">(</span><span class="k ty" style="width:36.00px">int</span><span class="k pn" style="width:12.00px"> </span><span class="k pn" style="width:11.15px">*</span><span class="k pn" style="width:11.15px">)</span><span class="k pn" style="width:11.15px">(</span><span class="k pn" style="width:11.15px">*</span><span class="k pn" style="width:11.15px">(</span><span class="k ty" style="width:36.00px">int</span><span class="k pn" style="width:12.00px"> </span><span class="k pn" style="width:11.15px">*</span><span class="k pn" style="width:11.15px">)</span><span class="k pn" style="width:11.15px">(</span><span class="k va" style="width:60.00px">iVar3</span><span class="k pn" style="width:12.00px"> </span><span class="k pn" style="width:12.00px">+</span><span class="k pn" style="width:12.00px"> </span><span class="k sc" style="width:48.00px">0x20</span><span class="k pn" style="width:11.15px">)</span><span class="k pn" style="width:12.00px"> </span><span class="k pn" style="width:12.00px">+</span><span class="k pn" style="width:12.00px"> </span><span class="k va" style="width:60.00px">iVar1</span><span class="k pn" style="width:12.00px"> </span><span class="k pn" style="width:12.00px">+</span><span class="k pn" style="width:12.00px"> </span><span class="k va" style="width:60.00px">iVar5</span><span class="k pn" style="width:12.00px"> </span><span class="k pn" style="width:11.15px">*</span><span class="k pn" style="width:12.00px"> </span><span class="k sc" style="width:36.00px">0x4</span><span class="k pn" style="width:11.15px">)</span><span class="k pn" style="width:12.00px"> </span><span class="k pn" style="width:12.00px">+</span><span class="k pn" style="width:12.00px"> </span><span class="k va" style="width:60.00px">iVar1</span><span class="k pn" style="width:11.15px">)</span><span class="k pn" style="width:12.00px">;</span></div>
<div class="t" style="left:91.88000000000011px;top:802.52px"><span class="k ty" style="width:24.00px">do</span><span class="k pn" style="width:12.00px"> </span><span class="k pn" style="width:12.00px">{</span></div>
<div class="t" style="left:114.79999999999995px;top:832.09px"><span class="k va" style="width:60.00px">bVar2</span><span class="k pn" style="width:12.00px"> </span><span class="k pn" style="width:12.00px">=</span><span class="k pn" style="width:12.00px"> </span><span class="k pn" style="width:11.15px">*</span><span class="k va" style="width:72.00px">pbVar7</span><span class="k pn" style="width:12.00px">;</span></div>
<div class="abs" style="left:115.3px;top:860.1px;width:60.5px;height:29.3px;background:#56554a"></div><div class="abs" style="left:115.3px;top:860.1px;width:3px;height:29.3px;background:#6c6c6c"></div>
<div class="t" style="left:114.79999999999995px;top:861.65px"><span class="k va hs" style="width:60.00px">uVar4</span><span class="k pn" style="width:12.00px"> </span><span class="k pn" style="width:12.00px">=</span><span class="k pn" style="width:12.00px"> </span><span class="k pn" style="width:11.15px">(</span><span class="k va" style="width:60.00px">uVar4</span><span class="k pn" style="width:12.00px"> </span><span class="k pn" style="width:12.00px">&gt;</span><span class="k pn" style="width:12.00px">&gt;</span><span class="k pn" style="width:12.00px"> </span><span class="k sc" style="width:36.00px">0xd</span><span class="k pn" style="width:12.00px"> </span><span class="k pn" style="width:12.00px">|</span><span class="k pn" style="width:12.00px"> </span><span class="k va" style="width:60.00px">uVar4</span><span class="k pn" style="width:12.00px"> </span><span class="k pn" style="width:12.00px">&lt;</span><span class="k pn" style="width:12.00px">&lt;</span><span class="k pn" style="width:12.00px"> </span><span class="k sc" style="width:48.00px">0x13</span><span class="k pn" style="width:11.15px">)</span><span class="k pn" style="width:12.00px"> </span><span class="k pn" style="width:12.00px">+</span><span class="k pn" style="width:12.00px"> </span><span class="k pn" style="width:11.15px">(</span><span class="k ty" style="width:48.00px">uint</span><span class="k pn" style="width:11.15px">)</span><span class="k va" style="width:60.00px">bVar2</span><span class="k pn" style="width:12.00px">;</span></div>
<div class="t" style="left:114.79999999999995px;top:891.22px"><span class="k va" style="width:72.00px">pbVar7</span><span class="k pn" style="width:12.00px"> </span><span class="k pn" style="width:12.00px">=</span><span class="k pn" style="width:12.00px"> </span><span class="k va" style="width:72.00px">pbVar7</span><span class="k pn" style="width:12.00px"> </span><span class="k pn" style="width:12.00px">+</span><span class="k pn" style="width:12.00px"> </span><span class="k sc" style="width:36.00px">0x1</span><span class="k pn" style="width:12.00px">;</span></div>
<div class="t" style="left:91.88000000000011px;top:920.78px"><span class="k pn" style="width:12.00px">}</span><span class="k pn" style="width:12.00px"> </span><span class="k ty" style="width:60.00px">while</span><span class="k pn" style="width:12.00px"> </span><span class="k pn" style="width:11.15px">(</span><span class="k va" style="width:60.00px">bVar2</span><span class="k pn" style="width:12.00px"> </span><span class="k pn" style="width:12.00px">!</span><span class="k pn" style="width:12.00px">=</span><span class="k pn" style="width:12.00px"> </span><span class="k sc" style="width:36.00px">0x0</span><span class="k pn" style="width:11.15px">)</span><span class="k pn" style="width:12.00px">;</span></div>
<div class="t" style="left:91.88000000000011px;top:950.35px"><span class="k ty" style="width:24.00px">if</span><span class="k pn" style="width:12.00px"> </span><span class="k pn" style="width:11.15px">(</span><span class="k va" style="width:60.00px">uVar4</span><span class="k pn" style="width:12.00px"> </span><span class="k pn" style="width:12.00px">+</span><span class="k pn" style="width:12.00px"> </span><span class="k va" style="width:60.00px">uVar8</span><span class="k pn" style="width:12.00px"> </span><span class="k pn" style="width:12.00px">=</span><span class="k pn" style="width:12.00px">=</span><span class="k pn" style="width:12.00px"> </span><span class="k pm" style="width:84.00px">param_1</span><span class="k pn" style="width:11.15px">)</span><span class="k pn" style="width:12.00px"> </span><span class="k pn" style="width:12.00px">{</span></div>
<div class="t" style="left:229.4000000000001px;top:979.92px"><span class="cm">/* WARNING: Could not recover jumptable at 0x00000086. Too many branches */</span></div>
<div class="t" style="left:229.4000000000001px;top:1009.48px"><span class="cm">/* WARNING: Treating indirect jump as call */</span></div>
<div class="t" style="left:114.79999999999995px;top:1039.05px"><span class="k pn" style="width:11.15px">(</span><span class="k pn" style="width:11.15px">*</span><span class="k pn" style="width:11.15px">(</span><span class="k ty" style="width:48.00px">code</span><span class="k pn" style="width:12.00px"> </span><span class="k pn" style="width:11.15px">*</span><span class="k pn" style="width:11.15px">)</span><span class="k pn" style="width:11.15px">(</span><span class="k pn" style="width:11.15px">*</span><span class="k pn" style="width:11.15px">(</span><span class="k ty" style="width:36.00px">int</span><span class="k pn" style="width:12.00px"> </span><span class="k pn" style="width:11.15px">*</span><span class="k pn" style="width:11.15px">)</span><span class="k pn" style="width:11.15px">(</span><span class="k pn" style="width:11.15px">*</span><span class="k pn" style="width:11.15px">(</span><span class="k ty" style="width:36.00px">int</span><span class="k pn" style="width:12.00px"> </span><span class="k pn" style="width:11.15px">*</span><span class="k pn" style="width:11.15px">)</span><span class="k pn" style="width:11.15px">(</span><span class="k va" style="width:60.00px">iVar3</span><span class="k pn" style="width:12.00px"> </span><span class="k pn" style="width:12.00px">+</span><span class="k pn" style="width:12.00px"> </span><span class="k sc" style="width:48.00px">0x1c</span><span class="k pn" style="width:11.15px">)</span><span class="k pn" style="width:12.00px"> </span><span class="k pn" style="width:12.00px">+</span><span class="k pn" style="width:12.00px"> </span><span class="k va" style="width:60.00px">iVar1</span><span class="k pn" style="width:12.00px"> </span><span class="k pn" style="width:12.00px">+</span><span class="k pn" style="width:12.00px"> </span><span class="k pn" style="width:96.00px">CONCAT22</span><span class="k pn" style="width:11.15px">(</span><span class="k pn" style="width:11.15px">(</span><span class="k ty" style="width:60.00px">short</span><span class="k pn" style="width:11.15px">)</span><span class="k pn" style="width:11.15px">(</span><span class="k pn" style="width:11.15px">(</span><span class="k ty" style="width:48.00px">uint</span><span class="k pn" style="width:11.15px">)</span><span class="k va" style="width:60.00px">iVar5</span><span class="k pn" style="width:12.00px"> </span><span class="k pn" style="width:12.00px">&gt;</span><span class="k pn" style="width:12.00px">&gt;</span><span class="k pn" style="width:12.00px"> </span><span class="k sc" style="width:48.00px">0x10</span><span class="k pn" style="width:11.15px">)</span><span class="k pn" style="width:12.00px">,</span></div>
<div class="t" style="left:114.79999999999995px;top:1068.61px"><span class="k ty" style="width:72.00px">return</span><span class="k pn" style="width:12.00px">;</span></div>
<div class="t" style="left:91.88000000000011px;top:1098.17px"><span class="k pn" style="width:12.00px">}</span></div>
<div class="t" style="left:68.96000000000004px;top:1127.74px"><span class="k pn" style="width:12.00px">}</span></div>
<div class="t" style="left:46.039999999999964px;top:1157.31px"><span class="k pn" style="width:12.00px">}</span></div>
<div class="t" style="left:46.039999999999964px;top:1186.87px"><span class="k va" style="width:72.00px">puVar6</span><span class="k pn" style="width:12.00px"> </span><span class="k pn" style="width:12.00px">=</span><span class="k pn" style="width:12.00px"> </span><span class="k pn" style="width:11.15px">(</span><span class="k ty" style="width:120.00px">undefined4</span><span class="k pn" style="width:12.00px"> </span><span class="k pn" style="width:11.15px">*</span><span class="k pn" style="width:11.15px">)</span><span class="k pn" style="width:11.15px">*</span><span class="k va" style="width:72.00px">puVar6</span><span class="k pn" style="width:12.00px">;</span></div>
<div class="t" style="left:23.12000000000012px;top:1216.43px"><span class="k pn" style="width:12.00px">}</span><span class="k pn" style="width:12.00px"> </span><span class="k ty" style="width:60.00px">while</span><span class="k pn" style="width:11.15px">(</span><span class="k pn" style="width:12.00px"> </span><span class="k sc" style="width:48.00px">true</span><span class="k pn" style="width:12.00px"> </span><span class="k pn" style="width:11.15px">)</span><span class="k pn" style="width:12.00px">;</span></div>
<div class="t" style="left:1.7999999999999545px;top:1246.00px"><span class="k pn" style="width:12.00px">}</span></div>
</div>
<!-- decompile vertical scrollbar -->
<div class="abs" style="left:2380px;top:55px;width:18px;height:1303px;background:#3f4346"></div>
<div class="abs" style="left:2380px;top:315px;width:18px;height:1043px;background:#565b5f"></div>
<!-- horizontal scrollbar -->
<div class="abs" style="left:1241px;top:1358px;width:1157px;height:17px;background:#3f4346"></div>
<div class="abs" style="left:1241px;top:1358px;width:564px;height:17px;background:#565b5f"></div>
<div class="abs" style="left:2380px;top:1358px;width:18px;height:17px;background:#3c4043"></div>
<div class="abs" style="left:1210px;top:1375px;width:1190px;height:1.5px;background:#5e6163"></div>
<div class="abs" style="left:1210px;top:1376.5px;width:1190px;height:1.5px;background:#3c3f41"></div>
<div class="abs" style="left:2397.8px;top:13px;width:2.2px;height:1363px;background:#5e6163"></div>
<div class="abs" style="left:2400px;top:0;width:2px;height:1378px;background:#242628"></div>
<div class="abs" style="left:2402px;top:0;width:2px;height:1378px;background:#000"></div>

<div class="abs" style="left:362px;top:439px;width:784px;height:173px;background:#fff;border:5px solid #b266ff"></div>
<div class="abs" id="ann" style="left:367px;top:444px;width:774px;height:163px;color:#b266ff;font-size:33px;line-height:37.5px;text-align:center;padding-top:5px;white-space:pre;letter-spacing:0.9px;-webkit-text-stroke:0.75px #b266ff">Location where resolved hashes are executed.

We can set a breakpoint here to determine
resolved values.</div>
<div class="abs" style="left:217px;top:790.5px;width:527px;height:45px;border:4px solid #b266ff;box-shadow:3px 4px 3px rgba(120,120,120,.65), inset 3px 5px 4px rgba(125,125,125,.6)"></div>
<div class="abs" style="left:1329px;top:1086px;width:1069px;height:71.5px;border:4px solid #b266ff;box-shadow:3px 4px 3px rgba(120,120,120,.65), inset 3px 5px 4px rgba(125,125,125,.6)"></div>

</body></html>
